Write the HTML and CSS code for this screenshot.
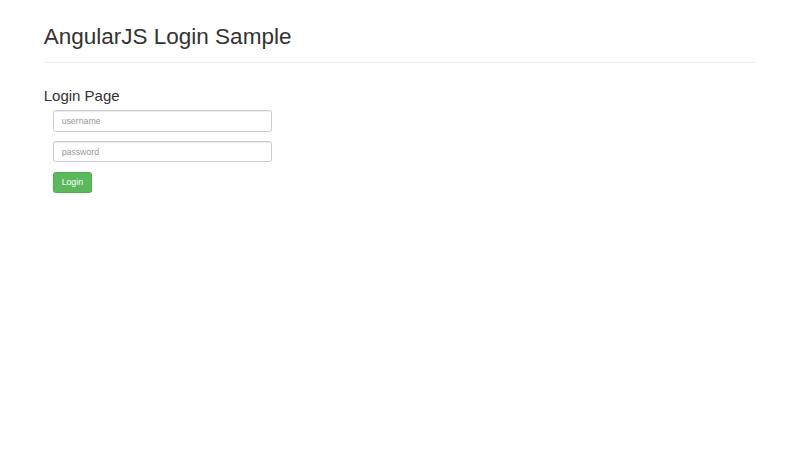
FILE: index.html
```html
<!DOCTYPE html>
<html lang="en">
<head>
<meta charset="utf-8">
<title>AngularJS Login Sample</title>
<link rel="stylesheet" href="styles.css">
</head>
<body>
<div class="container">
  <div class="page-header">
    <h1 class="title">AngularJS Login Sample</h1>
  </div>
  <div class="view">
    <h3 class="subtitle">Login Page</h3>
    <form class="login-form">
      <div class="form-group">
        <input class="form-control" type="text" placeholder="username">
      </div>
      <div class="form-group">
        <input class="form-control" type="password" placeholder="password">
      </div>
      <button class="btn btn-success" type="button">Login</button>
    </form>
  </div>
</div>
</body>
</html>
```
FILE: styles.css
```css
html, body {
  margin: 0;
  padding: 0;
  background: #fff;
}
body {
  font-family: "Liberation Sans", Arial, Helvetica, sans-serif;
  color: #333;
  font-size: 8.75px;
  line-height: 1.42857;
}
.container {
  width: 731.25px;
  margin: 0 auto;
  padding: 0 9.375px;
  box-sizing: border-box;
}
.page-header {
  margin: 25px 0 12.5px;
  padding-bottom: 5.625px;
  border-bottom: 1px solid #eee;
}
.title {
  margin: 0 0 6.25px;
  font-size: 22.5px;
  line-height: 24.75px;
  font-weight: 500;
}
.subtitle {
  margin: 25px 0 6.25px;
  font-size: 15px;
  line-height: 16.5px;
  font-weight: 500;
}
.login-form {
  margin: 0;
  padding-left: 9.375px;
}
.form-group {
  margin-bottom: 9.375px;
}
.form-control {
  display: block;
  box-sizing: border-box;
  width: 218.75px;
  height: 21.25px;
  padding: 3.75px 7.5px;
  font-family: inherit;
  font-size: 8.75px;
  line-height: 1.42857;
  color: #555;
  background: #fff;
  border: 1px solid #ccc;
  border-radius: 2.5px;
  box-shadow: inset 0 1px 1px rgba(0, 0, 0, 0.075);
  outline: none;
}
.form-control::placeholder {
  color: #999;
}
.btn {
  display: inline-block;
  box-sizing: border-box;
  height: 21.25px;
  padding: 3.75px 7.5px;
  font-family: inherit;
  font-size: 8.75px;
  line-height: 1.42857;
  border: 1px solid transparent;
  border-radius: 2.5px;
  cursor: pointer;
}
.btn-success {
  color: #fff;
  background: #5cb85c;
  border-color: #4cae4c;
}
```
